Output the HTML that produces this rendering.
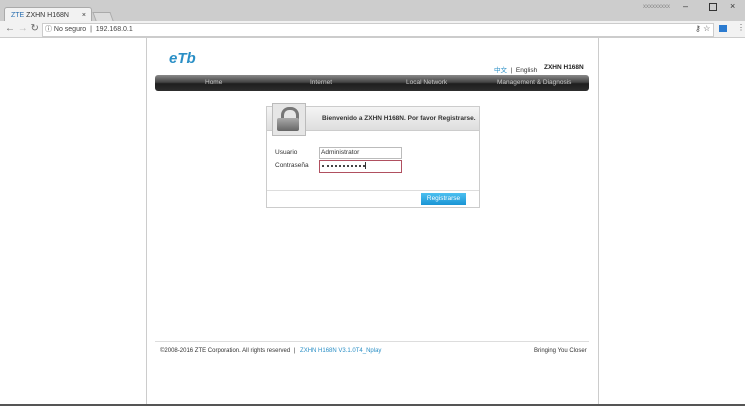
<!DOCTYPE html><html><head><style>
body{margin:0;width:745px;height:406px;overflow:hidden;background:#fff;font-family:"Liberation Sans",sans-serif;position:relative}
.a{position:absolute}
</style></head><body>
<div class="a" style="left:0;top:0;width:745px;height:21px;background:#cdcdcd"></div>
<div class="a" style="left:4px;top:7px;width:86px;height:15px;background:#f2f2f2;border:1px solid #aaa;border-bottom:none;border-radius:3px 3px 0 0;font-size:7px;color:#333;line-height:15px"><span style="color:#2a6fb0;margin-left:6px">ZTE</span> ZXHN H168N<span style="position:absolute;right:5px">×</span></div>
<div class="a" style="left:94px;top:12px;width:16px;height:8px;border:1px solid #aaa;border-bottom:none;background:#dcdcdc;transform:skewX(20deg)"></div>
<div class="a" style="left:643px;top:4px;font-size:6px;color:#888">xxxxxxxxx</div>
<div class="a" style="left:683px;top:1px;font-size:9px;color:#333">–</div>
<div class="a" style="left:709px;top:3px;width:6px;height:6px;border:1px solid #333"></div>
<div class="a" style="left:730px;top:1px;font-size:9px;color:#333">×</div>
<div class="a" style="left:0;top:21px;width:745px;height:16px;background:#f2f2f2;border-bottom:1px solid #ccc"></div>
<div class="a" style="left:5px;top:23px;font-size:10px;color:#666">← <span style="color:#bbb">→</span> ↻</div>
<div class="a" style="left:42px;top:23px;width:670px;height:12px;background:#fff;border:1px solid #ccc;font-size:7px;color:#444;line-height:12px">&nbsp;ⓘ No seguro &nbsp;| &nbsp;192.168.0.1</div>
<div class="a" style="left:695px;top:24px;font-size:8px;color:#444">⚷ ☆</div>
<div class="a" style="left:719px;top:25px;width:8px;height:7px;background:#2b7bd0"></div>
<div class="a" style="left:737px;top:23px;font-size:8px;color:#555">⋮</div>

<div class="a" style="left:146px;top:38px;width:451px;height:366px;border-left:1px solid #ccc;border-right:1px solid #ccc"></div>
<div class="a" style="left:0;top:404px;width:745px;height:2px;background:#555"></div>

<div class="a" style="left:169px;top:50px;font-size:15px;font-style:italic;font-weight:bold;color:#2a8fc6;font-family:'Liberation Sans',sans-serif">eTb</div>
<div class="a" style="left:494px;top:64px;font-size:6.5px;color:#333"><span style="color:#2a8fc6">中文</span> &nbsp;| &nbsp;English</div>
<div class="a" style="left:544px;top:64px;font-size:6.5px;font-weight:bold;color:#222">ZXHN H168N</div>
<div class="a" style="left:155px;top:75px;width:434px;height:16px;border-radius:3px;background:linear-gradient(#8a8a8a,#444 45%,#1e1e1e 55%,#2e2e2e);font-size:6.5px;color:#c8c8c8;line-height:16px">
<span class="a" style="left:50px">Home</span><span class="a" style="left:155px">Internet</span><span class="a" style="left:251px">Local Network</span><span class="a" style="left:342px">Management &amp; Diagnosis</span></div>

<div class="a" style="left:266px;top:106px;width:212px;height:100px;border:1px solid #ccc;background:#fff"></div>
<div class="a" style="left:267px;top:107px;width:212px;height:23px;background:linear-gradient(#f5f5f5,#dedede);border-bottom:1px solid #ccc"></div>
<div class="a" style="left:272px;top:103px;width:32px;height:31px;background:#e6e6e6;border:1px solid #bbb"></div>
<div class="a" style="left:281px;top:107px;width:12px;height:12px;border:3px solid #777;border-bottom:none;border-radius:8px 8px 0 0"></div>
<div class="a" style="left:277px;top:118px;width:22px;height:13px;background:linear-gradient(#aaa,#666);border-radius:2px"></div>
<div class="a" style="left:322px;top:115px;font-size:6.5px;font-weight:bold;color:#333">Bienvenido a ZXHN H168N. Por favor Registrarse.</div>
<div class="a" style="left:275px;top:149px;font-size:6.5px;color:#333">Usuario</div>
<div class="a" style="left:275px;top:162px;font-size:6.5px;color:#333">Contraseña</div>
<div class="a" style="left:319px;top:147px;width:80px;height:10px;border:1px solid #bbb;font-size:6.5px;color:#333;line-height:10px;padding-left:1px">Administrator</div>
<div class="a" style="left:319px;top:160px;width:81px;height:11px;border:1px solid #b05060"></div>
<div class="a" style="left:322px;top:165px;width:43px;height:0;border-top:2px dotted #444"></div>
<div class="a" style="left:365px;top:162px;width:1px;height:7px;background:#333"></div>
<div class="a" style="left:267px;top:190px;width:212px;height:1px;background:#ddd"></div>
<div class="a" style="left:421px;top:193px;width:45px;height:12px;background:linear-gradient(#4cc0f0,#1a94d4);color:#fff;font-size:6.5px;text-align:center;line-height:12px">Registrarse</div>

<div class="a" style="left:155px;top:341px;width:434px;height:1px;background:#ddd"></div>
<div class="a" style="left:160px;top:348px;font-size:6px;color:#333">©2008-2016 ZTE Corporation. All rights reserved &nbsp;| &nbsp; <span style="color:#2a8fc6">ZXHN H168N V3.1.0T4_Nplay</span></div>
<div class="a" style="left:534px;top:348px;font-size:6px;color:#333">Bringing You Closer</div>
</body></html>
